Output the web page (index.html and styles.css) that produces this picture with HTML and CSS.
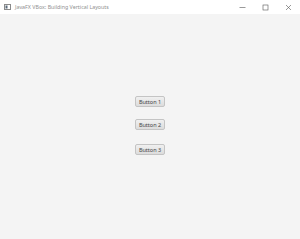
FILE: index.html
```html
<!DOCTYPE html>
<html lang="en">
<head>
    <meta charset="UTF-8">
    <title>JavaFX VBox: Building Vertical Layouts</title>
    <link rel="stylesheet" href="styles.css">
</head>
<body>
    <div class="window">
        <div class="titlebar">
            <div class="app-icon">
                <svg width="7" height="6" viewBox="0 0 7 6">
                    <rect x="0.5" y="0.5" width="6" height="5" fill="#fff" stroke="#8a8a8a"/>
                    <rect x="1.5" y="1.5" width="2" height="3" fill="#5a6a7a"/>
                </svg>
            </div>
            <span class="title">JavaFX VBox: Building Vertical Layouts</span>
            <div class="controls">
                <span class="ctl">
                    <svg width="7" height="7" viewBox="0 0 7 7"><line x1="0.5" y1="3.5" x2="6.5" y2="3.5" stroke="#555" stroke-width="0.6"/></svg>
                </span>
                <span class="ctl">
                    <svg width="7" height="7" viewBox="0 0 7 7"><rect x="1" y="1" width="5" height="5" fill="none" stroke="#555" stroke-width="0.6"/></svg>
                </span>
                <span class="ctl">
                    <svg width="7" height="7" viewBox="0 0 7 7"><path d="M1 1L6 6M6 1L1 6" stroke="#555" stroke-width="0.6"/></svg>
                </span>
            </div>
        </div>
        <div class="content">
            <div class="vbox">
                <button class="fx-button">Button 1</button>
                <button class="fx-button">Button 2</button>
                <button class="fx-button">Button 3</button>
            </div>
        </div>
    </div>
</body>
</html>
```

FILE: styles.css
```css
html, body {
    margin: 0;
    height: 100%;
}
body {
    font-family: 'Noto Sans', 'Liberation Sans', sans-serif;
    background-color: #f4f4f4;
}
.window {
    display: flex;
    flex-direction: column;
    height: 239px;
    width: 300px;
}
.titlebar {
    height: 14px;
    background: #ffffff;
    display: flex;
    align-items: center;
    padding-left: 4px;
}
.app-icon {
    display: flex;
    width: 7px;
    height: 6px;
    margin-right: 4px;
}
.title {
    font-size: 5.3px;
    color: #8f8f8f;
}
.controls {
    margin-left: auto;
    display: flex;
    height: 100%;
}
.ctl {
    width: 23px;
    display: flex;
    align-items: center;
    justify-content: center;
}
.content {
    flex: 1;
    background: #f4f4f4;
    display: flex;
    justify-content: center;
    padding-top: 82px;
}
.vbox {
    display: flex;
    flex-direction: column;
    align-items: center;
    gap: 12px;
}
.fx-button {
    font-family: 'Noto Sans', 'Liberation Sans', sans-serif;
    font-size: 5.5px;
    color: #444;
    width: 30px;
    height: 11px;
    padding: 0;
    border: 1px solid #c4c4c4;
    border-radius: 2px;
    background: linear-gradient(#f0f0f0, #dcdcdc);
}
.fx-button:last-child {
    margin-top: 2px;
}
```
